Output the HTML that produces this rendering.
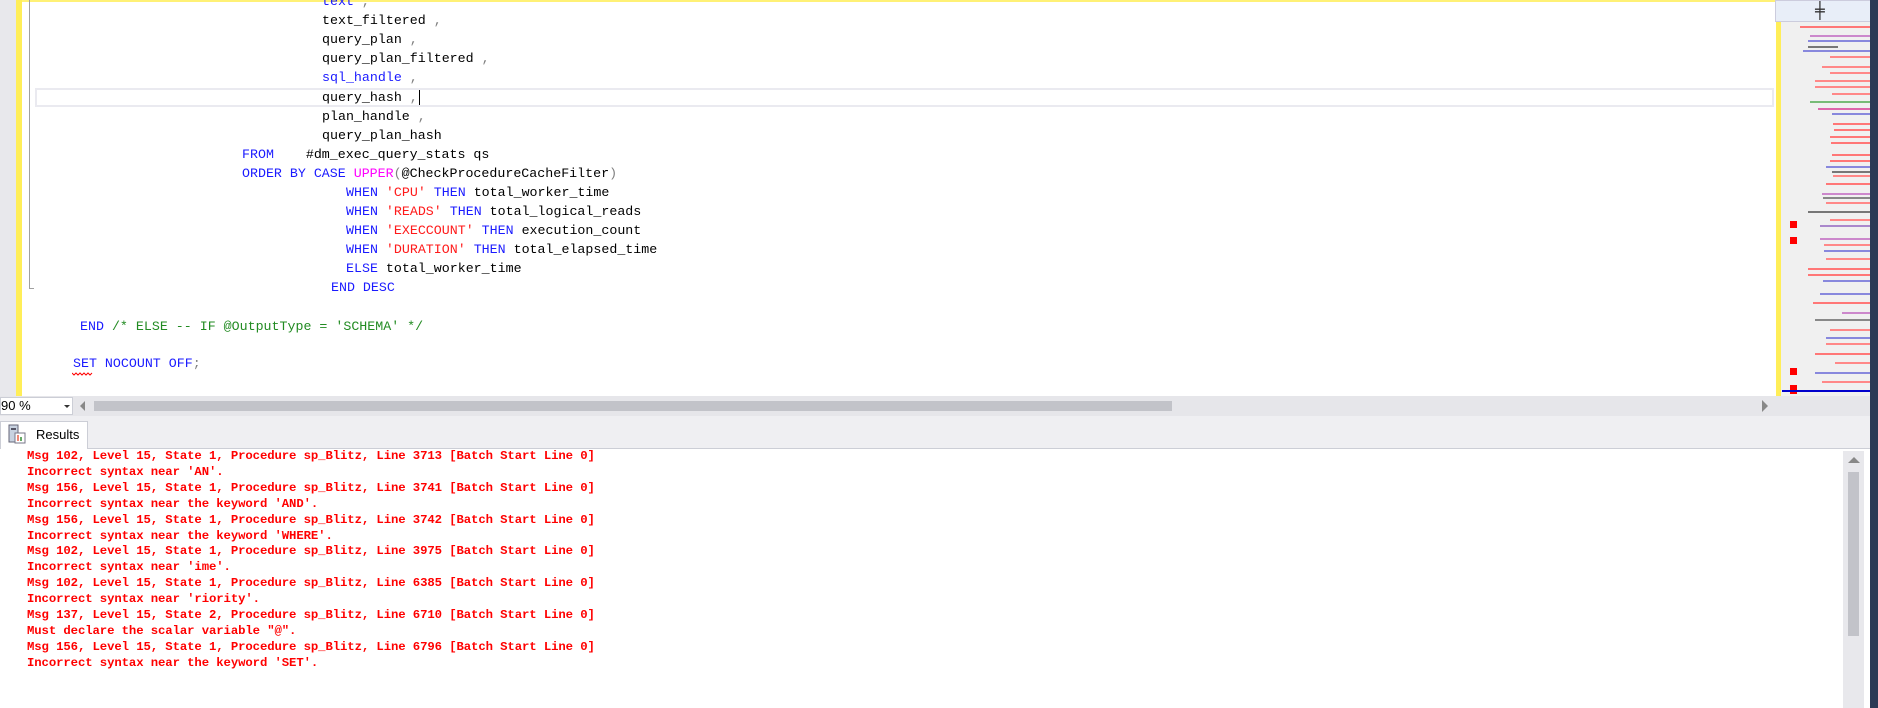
<!DOCTYPE html>
<html><head><meta charset="utf-8"><style>
*{margin:0;padding:0;box-sizing:border-box}
body{width:1878px;height:708px;background:#fff;position:relative;overflow:hidden;font-family:"Liberation Mono",monospace}
.a{position:absolute}
.code{position:absolute;font-family:"Liberation Mono",monospace;font-size:13.3px;line-height:19px;white-space:pre;color:#000}
.k{color:#1a1aff}.f{color:#ff00ff}.s{color:#ff1a1a}.c{color:#228b22}.g{color:#808080}
.msg{position:absolute;left:27px;font-family:"Liberation Mono",monospace;font-size:12.3px;color:#ff0000;white-space:pre;line-height:15.9px;font-weight:bold;letter-spacing:-0.1px}
.mm{position:absolute;height:2px}
</style></head><body>
<div class="a" style="left:0;top:0;width:1878px;height:2px;background:#fff176"></div>
<div class="a" style="left:0;top:0;width:16px;height:396px;background:#e8e8ec"></div>
<div class="a" style="left:16px;top:0;width:6px;height:396px;background:#ffee58"></div>
<div class="a" style="left:29px;top:0;width:1px;height:289px;background:#a0a0a0"></div>
<div class="a" style="left:29px;top:288px;width:5px;height:1px;background:#a0a0a0"></div>
<div class="a" style="left:35px;top:88px;width:1739px;height:19px;border:2px solid #eaeaf0"></div>
<div class="a" style="left:419px;top:90px;width:1px;height:15px;background:#000"></div>

<div class="code" style="left:322px;top:-8px"><span class="k">text</span> <span class="g">,</span></div>
<div class="code" style="left:322px;top:11px">text_filtered <span class="g">,</span></div>
<div class="code" style="left:322px;top:30px">query_plan <span class="g">,</span></div>
<div class="code" style="left:322px;top:49px">query_plan_filtered <span class="g">,</span></div>
<div class="code" style="left:322px;top:68px"><span class="k">sql_handle</span> <span class="g">,</span></div>
<div class="code" style="left:322px;top:88px">query_hash <span class="g">,</span></div>
<div class="code" style="left:322px;top:107px">plan_handle <span class="g">,</span></div>
<div class="code" style="left:322px;top:126px">query_plan_hash</div>
<div class="code" style="left:242px;top:145px"><span class="k">FROM</span>    #dm_exec_query_stats qs</div>
<div class="code" style="left:242px;top:164px"><span class="k">ORDER BY CASE</span> <span class="f">UPPER</span><span class="g">(</span>@CheckProcedureCacheFilter<span class="g">)</span></div>
<div class="code" style="left:346px;top:183px"><span class="k">WHEN</span> <span class="s">'CPU'</span> <span class="k">THEN</span> total_worker_time</div>
<div class="code" style="left:346px;top:202px"><span class="k">WHEN</span> <span class="s">'READS'</span> <span class="k">THEN</span> total_logical_reads</div>
<div class="code" style="left:346px;top:221px"><span class="k">WHEN</span> <span class="s">'EXECCOUNT'</span> <span class="k">THEN</span> execution_count</div>
<div class="code" style="left:346px;top:240px"><span class="k">WHEN</span> <span class="s">'DURATION'</span> <span class="k">THEN</span> total_elapsed_time</div>
<div class="code" style="left:346px;top:259px"><span class="k">ELSE</span> total_worker_time</div>
<div class="code" style="left:331px;top:278px"><span class="k">END DESC</span></div>
<div class="code" style="left:80px;top:317px"><span class="k">END</span> <span class="c">/* ELSE -- IF @OutputType = 'SCHEMA' */</span></div>
<div class="code" style="left:73px;top:354px"><span class="k">SET NOCOUNT OFF</span><span class="g">;</span></div>
<svg class="a" style="left:72px;top:372px" width="22" height="4"><path d="M0 1 L2 3 L4 1 L6 3 L8 1 L10 3 L12 1 L14 3 L16 1 L18 3 L20 1" stroke="#ff0000" stroke-width="1" fill="none"/></svg>

<div class="a" style="left:1776px;top:0;width:5px;height:396px;background:#ffee58"></div>
<div class="a" style="left:1775px;top:0;width:96px;height:22px;background:#e8eef8;border:1px solid #ccd"></div>
<div class="a" style="left:1815px;top:4px;font-size:16px;color:#333;line-height:14px;font-family:'DejaVu Sans',sans-serif">╪</div>
<div class="a" style="left:1781px;top:22px;width:90px;height:374px;background:#f0f0f0"></div>
<div class="a" style="left:1870px;top:0;width:8px;height:708px;background:#2b3a55"></div>
<div class="a" style="left:1790px;top:221px;width:7px;height:7px;background:#ff0000"></div>
<div class="a" style="left:1790px;top:237px;width:7px;height:7px;background:#ff0000"></div>
<div class="a" style="left:1790px;top:368px;width:7px;height:7px;background:#ff0000"></div>
<div class="a" style="left:1790px;top:385px;width:7px;height:9px;background:#ff0000"></div>
<div class="a" style="left:1782px;top:390px;width:88px;height:2px;background:#0000cc"></div>
<div class="mm" style="left:1800px;top:26px;width:70px;background:#f77"></div>
<div class="mm" style="left:1810px;top:35px;width:60px;background:#c8c"></div>
<div class="mm" style="left:1808px;top:40px;width:62px;background:#88d"></div>
<div class="mm" style="left:1808px;top:46px;width:30px;background:#777"></div>
<div class="mm" style="left:1803px;top:50px;width:67px;background:#88d"></div>
<div class="mm" style="left:1830px;top:56px;width:40px;background:#f88"></div>
<div class="mm" style="left:1822px;top:66px;width:48px;background:#f88"></div>
<div class="mm" style="left:1830px;top:72px;width:40px;background:#f88"></div>
<div class="mm" style="left:1815px;top:80px;width:55px;background:#f88"></div>
<div class="mm" style="left:1815px;top:86px;width:55px;background:#f88"></div>
<div class="mm" style="left:1832px;top:93px;width:38px;background:#f88"></div>
<div class="mm" style="left:1810px;top:101px;width:60px;background:#7b7"></div>
<div class="mm" style="left:1818px;top:108px;width:52px;background:#d6a"></div>
<div class="mm" style="left:1832px;top:113px;width:38px;background:#88d"></div>
<div class="mm" style="left:1833px;top:123px;width:37px;background:#f77"></div>
<div class="mm" style="left:1834px;top:129px;width:36px;background:#f77"></div>
<div class="mm" style="left:1830px;top:136px;width:40px;background:#f77"></div>
<div class="mm" style="left:1831px;top:142px;width:39px;background:#f77"></div>
<div class="mm" style="left:1832px;top:154px;width:38px;background:#f77"></div>
<div class="mm" style="left:1830px;top:160px;width:40px;background:#f77"></div>
<div class="mm" style="left:1826px;top:166px;width:44px;background:#88d"></div>
<div class="mm" style="left:1832px;top:171px;width:38px;background:#777"></div>
<div class="mm" style="left:1833px;top:175px;width:37px;background:#f88"></div>
<div class="mm" style="left:1826px;top:183px;width:44px;background:#f77"></div>
<div class="mm" style="left:1822px;top:193px;width:48px;background:#c8c"></div>
<div class="mm" style="left:1823px;top:197px;width:47px;background:#888"></div>
<div class="mm" style="left:1826px;top:202px;width:44px;background:#f88"></div>
<div class="mm" style="left:1808px;top:211px;width:62px;background:#777"></div>
<div class="mm" style="left:1830px;top:219px;width:40px;background:#f88"></div>
<div class="mm" style="left:1820px;top:225px;width:50px;background:#a8c"></div>
<div class="mm" style="left:1820px;top:238px;width:50px;background:#c8c"></div>
<div class="mm" style="left:1824px;top:244px;width:46px;background:#f88"></div>
<div class="mm" style="left:1824px;top:250px;width:46px;background:#88d"></div>
<div class="mm" style="left:1826px;top:258px;width:44px;background:#f88"></div>
<div class="mm" style="left:1808px;top:268px;width:62px;background:#f77"></div>
<div class="mm" style="left:1808px;top:274px;width:62px;background:#f77"></div>
<div class="mm" style="left:1823px;top:280px;width:47px;background:#88d"></div>
<div class="mm" style="left:1820px;top:293px;width:50px;background:#88d"></div>
<div class="mm" style="left:1813px;top:302px;width:57px;background:#f77"></div>
<div class="mm" style="left:1842px;top:312px;width:28px;background:#c8c"></div>
<div class="mm" style="left:1815px;top:319px;width:55px;background:#888"></div>
<div class="mm" style="left:1830px;top:329px;width:40px;background:#f88"></div>
<div class="mm" style="left:1826px;top:337px;width:44px;background:#88d"></div>
<div class="mm" style="left:1826px;top:343px;width:44px;background:#f88"></div>
<div class="mm" style="left:1815px;top:353px;width:55px;background:#f77"></div>
<div class="mm" style="left:1835px;top:362px;width:35px;background:#f88"></div>
<div class="mm" style="left:1815px;top:372px;width:55px;background:#88d"></div>
<div class="mm" style="left:1822px;top:381px;width:48px;background:#f88"></div>

<div class="a" style="left:0;top:396px;width:1870px;height:20px;background:#e6e6ea"></div>
<div class="a" style="left:0;top:397px;width:73px;height:18px;background:#fff;border:1px solid #ccced6"></div>
<div class="a" style="left:1px;top:398px;font-family:'Liberation Sans',sans-serif;font-size:13px;line-height:16px;color:#000">90 %</div>
<div class="a" style="left:64px;top:405px;width:0;height:0;border-left:3px solid transparent;border-right:3px solid transparent;border-top:3px solid #333"></div>
<div class="a" style="left:80px;top:401px;width:0;height:0;border-top:5px solid transparent;border-bottom:5px solid transparent;border-right:5px solid #888"></div>
<div class="a" style="left:94px;top:401px;width:1078px;height:10px;background:#c2c3c9"></div>
<div class="a" style="left:1762px;top:400px;width:0;height:0;border-top:6px solid transparent;border-bottom:6px solid transparent;border-left:6px solid #888"></div>

<div class="a" style="left:0;top:416px;width:1870px;height:33px;background:#efeff2"></div>
<div class="a" style="left:0;top:448px;width:1870px;height:1px;background:#ccced6"></div>
<div class="a" style="left:0;top:421px;width:88px;height:28px;background:#fff;border:1px solid #ccced6;border-bottom:none"></div>
<svg class="a" style="left:8px;top:424px" width="18" height="20"><rect x="1" y="1" width="9" height="17" fill="#c8d2e0" stroke="#667" stroke-width="1"/><rect x="3" y="4" width="5" height="2" fill="#556"/><rect x="7" y="9" width="10" height="10" fill="#fff" stroke="#778"/><rect x="9" y="11" width="2" height="6" fill="#e87"/><rect x="12" y="13" width="2" height="4" fill="#6a6"/></svg>
<div class="a" style="left:36px;top:427px;font-family:'Liberation Sans',sans-serif;font-size:13px;line-height:16px;color:#000">Results</div>

<div class="msg" style="top:449px">Msg 102, Level 15, State 1, Procedure sp_Blitz, Line 3713 [Batch Start Line 0]
Incorrect syntax near 'AN'.
Msg 156, Level 15, State 1, Procedure sp_Blitz, Line 3741 [Batch Start Line 0]
Incorrect syntax near the keyword 'AND'.
Msg 156, Level 15, State 1, Procedure sp_Blitz, Line 3742 [Batch Start Line 0]
Incorrect syntax near the keyword 'WHERE'.
Msg 102, Level 15, State 1, Procedure sp_Blitz, Line 3975 [Batch Start Line 0]
Incorrect syntax near 'ime'.
Msg 102, Level 15, State 1, Procedure sp_Blitz, Line 6385 [Batch Start Line 0]
Incorrect syntax near 'riority'.
Msg 137, Level 15, State 2, Procedure sp_Blitz, Line 6710 [Batch Start Line 0]
Must declare the scalar variable "@".
Msg 156, Level 15, State 1, Procedure sp_Blitz, Line 6796 [Batch Start Line 0]
Incorrect syntax near the keyword 'SET'.</div>

<div class="a" style="left:1843px;top:451px;width:21px;height:257px;background:#e8e8ec"></div>
<div class="a" style="left:1848px;top:457px;width:0;height:0;border-left:6px solid transparent;border-right:6px solid transparent;border-bottom:6px solid #888"></div>
<div class="a" style="left:1848px;top:472px;width:11px;height:164px;background:#c2c3c9"></div>
</body></html>
